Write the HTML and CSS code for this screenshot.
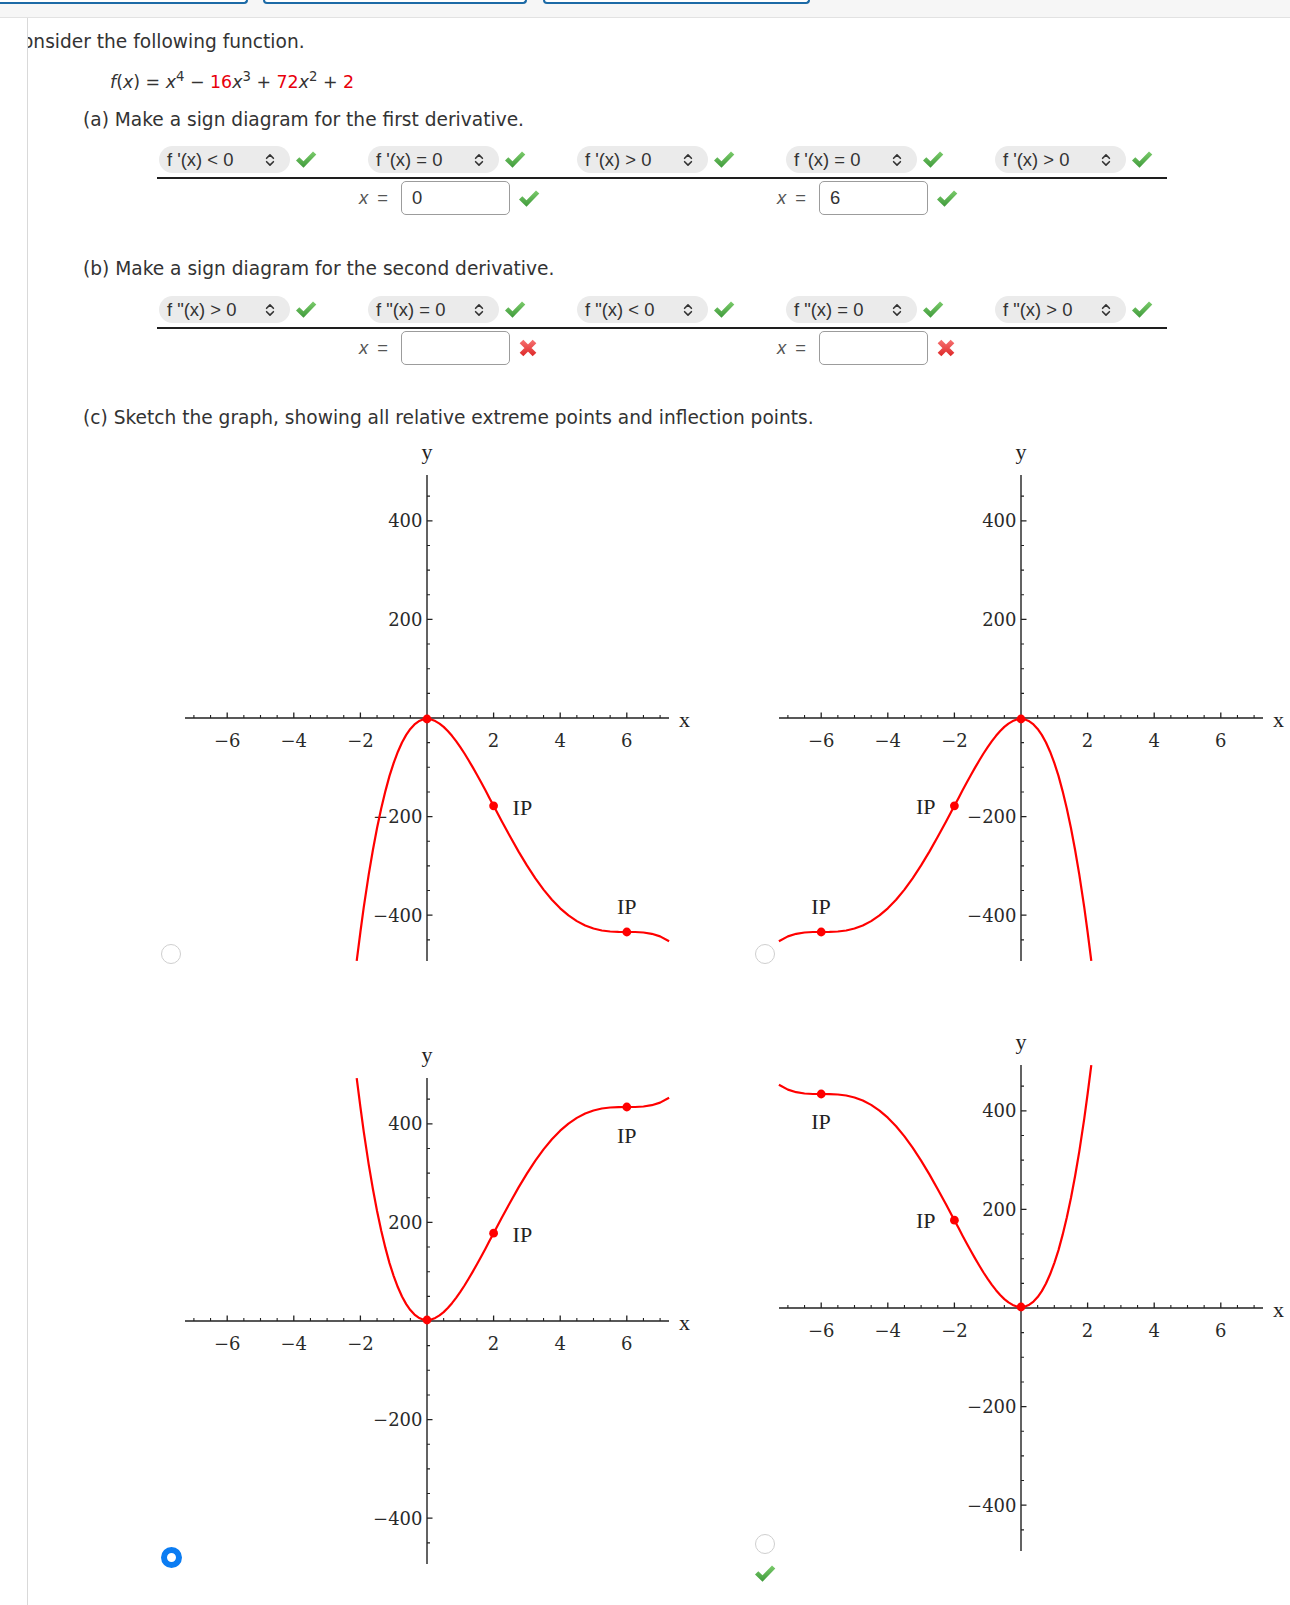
FILE: index.html
```html
<!DOCTYPE html>
<html lang="en">
<head>
<meta charset="utf-8">
<title>Sign diagrams</title>
<link rel="stylesheet" href="styles.css">
</head>
<body>
<svg class="defs" width="0" height="0" aria-hidden="true">
  <defs>
    <linearGradient id="gg" x1="0" y1="0" x2="0" y2="1">
      <stop offset="0" stop-color="#7ccc6c"/>
      <stop offset="1" stop-color="#3f9a3b"/>
    </linearGradient>
    <linearGradient id="rg" x1="0" y1="0" x2="0" y2="1">
      <stop offset="0" stop-color="#f46a6a"/>
      <stop offset="1" stop-color="#e02f2f"/>
    </linearGradient>
    <symbol id="chk" viewBox="0 0 22 19">
      <path d="M1 10.4 L4.3 7.3 L8.5 11.3 L18 1.4 L21.3 4.5 L8.5 17.7 Z" fill="url(#gg)"/>
    </symbol>
    <symbol id="crs" viewBox="0 0 20 20">
      <path d="M3.5 3.5 L16.5 16.5 M16.5 3.5 L3.5 16.5" stroke="url(#rg)" stroke-width="5.2" fill="none"/>
    </symbol>
    <symbol id="chev" viewBox="0 0 10 14">
      <path d="M1.6 5.3 L5 1.9 L8.4 5.3 M1.6 8.7 L5 12.1 L8.4 8.7" fill="none" stroke="#333" stroke-width="1.6" stroke-linecap="round" stroke-linejoin="round"/>
    </symbol>
    <g id="axes" fill="none" stroke="#222">
      <path d="M-242 0H242M0 -243V243" stroke-width="1.4"/>
      <path stroke-width="1.1" d="M16.65 0v-3M33.3 0v-3M49.95 0v-3M83.25 0v-3M99.9 0v-3M116.55 0v-3M149.85 0v-3M166.5 0v-3M183.15 0v-3M216.45 0v-3M233.1 0v-3M-16.65 0v-3M-33.3 0v-3M-49.95 0v-3M-83.25 0v-3M-99.9 0v-3M-116.55 0v-3M-149.85 0v-3M-166.5 0v-3M-183.15 0v-3M-216.45 0v-3M-233.1 0v-3M0 -24.65h3M0 -49.3h3M0 -73.95h3M0 -123.25h3M0 -147.9h3M0 -172.55h3M0 -221.85h3M0 24.65h3M0 49.3h3M0 73.95h3M0 123.25h3M0 147.9h3M0 172.55h3M0 221.85h3"/>
      <path stroke-width="1.3" d="M66.6 0v-5.5M133.2 0v-5.5M199.8 0v-5.5M-66.6 0v-5.5M-133.2 0v-5.5M-199.8 0v-5.5M0 -98.6h5.5M0 -197.2h5.5M0 98.6h5.5M0 197.2h5.5"/>
    </g>
    <g id="ticklabels" font-family="DejaVu Serif, serif" font-size="18" fill="#2a2a2a">
      <text x="-199.8" y="28.6" text-anchor="middle">−6</text>
      <text x="-133.2" y="28.6" text-anchor="middle">−4</text>
      <text x="-66.6" y="28.6" text-anchor="middle">−2</text>
      <text x="66.6" y="28.6" text-anchor="middle">2</text>
      <text x="133.2" y="28.6" text-anchor="middle">4</text>
      <text x="199.8" y="28.6" text-anchor="middle">6</text>
      <text x="-4.5" y="-190.6" text-anchor="end">400</text>
      <text x="-4.5" y="-92" text-anchor="end">200</text>
      <text x="-4.5" y="105.2" text-anchor="end">−200</text>
      <text x="-4.5" y="203.8" text-anchor="end">−400</text>
      <text x="0" y="-259.5" text-anchor="middle" font-family="Liberation Serif, Times New Roman, serif" font-size="22" fill="#222">y</text>
      <text x="252" y="8.7" font-family="Liberation Serif, Times New Roman, serif" font-size="22" fill="#222">x</text>
    </g>
    <path id="fcurve" fill="none" stroke="#ff0000" stroke-width="2.2" stroke-linejoin="round" d="M-70.3,-242.9 L-66.6,-214 L-63.3,-189.7 L-58.3,-156.6 L-54.1,-132 L-49.95,-110 L-45.8,-90.4 L-41.6,-73.1 L-37.5,-57.9 L-33.3,-44.9 L-29.1,-33.7 L-25,-24.5 L-20.8,-16.9 L-16.65,-10.9 L-12.5,-6.4 L-8.3,-3.3 L-4.2,-1.6 L0,-1 L4.2,-1.5 L8.3,-3.1 L12.5,-5.6 L16.65,-8.9 L20.8,-13 L25,-17.8 L29.1,-23.2 L33.3,-29.1 L37.5,-35.5 L41.6,-42.3 L45.8,-49.4 L49.95,-56.7 L54.1,-64.3 L58.3,-72 L62.4,-79.9 L66.6,-87.8 L74.9,-103.5 L83.25,-118.8 L91.6,-133.6 L99.9,-147.4 L108.2,-160.1 L116.55,-171.6 L124.9,-181.7 L133.2,-190.3 L141.5,-197.4 L149.85,-203.1 L158.2,-207.5 L166.5,-210.5 L174.8,-212.5 L183.15,-213.5 L191.5,-213.9 L199.8,-214 L208.1,-214 L216.45,-214.5 L224.8,-215.8 L233.1,-218.4 L242.1,-223.3"/>
    <g id="fdots" fill="#ff0000">
      <circle cx="0" cy="-1" r="4.4"/>
      <circle cx="66.6" cy="-87.8" r="4.4"/>
      <circle cx="199.8" cy="-214" r="4.4"/>
    </g>
  </defs>
</svg>

<div class="topbar">
  <div class="tab tab1"></div>
  <div class="tab tab2"></div>
  <div class="tab tab3"></div>
</div>

<div class="main">
  <p class="intro">Consider the following function.</p>
  <p class="formula"><i>f</i>(<i>x</i>) = <i>x</i><sup>4</sup> − <span class="red">16</span><i>x</i><sup>3</sup> + <span class="red">72</span><i>x</i><sup>2</sup> + <span class="red">2</span></p>

  <p class="part">(a) Make a sign diagram for the first derivative.</p>
  <div class="sign">
    <div class="sign-top">
      <div class="cell"><span class="sel"><span>f '(x) &lt; 0</span><svg class="chev"><use href="#chev"/></svg></span><svg class="ok"><use href="#chk"/></svg></div>
      <div class="cell"><span class="sel"><span>f '(x) = 0</span><svg class="chev"><use href="#chev"/></svg></span><svg class="ok"><use href="#chk"/></svg></div>
      <div class="cell"><span class="sel"><span>f '(x) &gt; 0</span><svg class="chev"><use href="#chev"/></svg></span><svg class="ok"><use href="#chk"/></svg></div>
      <div class="cell"><span class="sel"><span>f '(x) = 0</span><svg class="chev"><use href="#chev"/></svg></span><svg class="ok"><use href="#chk"/></svg></div>
      <div class="cell"><span class="sel"><span>f '(x) &gt; 0</span><svg class="chev"><use href="#chev"/></svg></span><svg class="ok"><use href="#chk"/></svg></div>
    </div>
    <div class="sign-bottom">
      <div></div>
      <div class="xg"><span class="xl"><i>x</i><span class="eq">=</span></span><span class="box">0</span><svg class="ok"><use href="#chk"/></svg></div>
      <div></div>
      <div class="xg"><span class="xl"><i>x</i><span class="eq">=</span></span><span class="box">6</span><svg class="ok"><use href="#chk"/></svg></div>
      <div></div>
    </div>
  </div>

  <p class="part part-b">(b) Make a sign diagram for the second derivative.</p>
  <div class="sign">
    <div class="sign-top">
      <div class="cell"><span class="sel"><span>f "(x) &gt; 0</span><svg class="chev"><use href="#chev"/></svg></span><svg class="ok"><use href="#chk"/></svg></div>
      <div class="cell"><span class="sel"><span>f "(x) = 0</span><svg class="chev"><use href="#chev"/></svg></span><svg class="ok"><use href="#chk"/></svg></div>
      <div class="cell"><span class="sel"><span>f "(x) &lt; 0</span><svg class="chev"><use href="#chev"/></svg></span><svg class="ok"><use href="#chk"/></svg></div>
      <div class="cell"><span class="sel"><span>f "(x) = 0</span><svg class="chev"><use href="#chev"/></svg></span><svg class="ok"><use href="#chk"/></svg></div>
      <div class="cell"><span class="sel"><span>f "(x) &gt; 0</span><svg class="chev"><use href="#chev"/></svg></span><svg class="ok"><use href="#chk"/></svg></div>
    </div>
    <div class="sign-bottom">
      <div></div>
      <div class="xg"><span class="xl"><i>x</i><span class="eq">=</span></span><span class="box"></span><svg class="bad"><use href="#crs"/></svg></div>
      <div></div>
      <div class="xg"><span class="xl"><i>x</i><span class="eq">=</span></span><span class="box"></span><svg class="bad"><use href="#crs"/></svg></div>
      <div></div>
    </div>
  </div>

  <p class="part part-c">(c) Sketch the graph, showing all relative extreme points and inflection points.</p>

  <div class="graphs">
    <div class="opt">
      <div class="rcol"><span class="radio"></span></div>
      <svg class="plot" width="515" height="540" viewBox="0 0 515 540">
        <g transform="translate(246 290)">
          <use href="#axes"/>
          <use href="#ticklabels"/>
          <g transform="scale(1 -1)"><use href="#fcurve"/><use href="#fdots"/></g>
          <text class="ip" x="85.6" y="97.3">IP</text>
          <text class="ip" x="199.8" y="196" text-anchor="middle">IP</text>
        </g>
      </svg>
    </div>
    <div class="opt">
      <div class="rcol"><span class="radio"></span></div>
      <svg class="plot" width="515" height="540" viewBox="0 0 515 540">
        <g transform="translate(246 290)">
          <use href="#axes"/>
          <use href="#ticklabels"/>
          <g transform="scale(-1 -1)"><use href="#fcurve"/><use href="#fdots"/></g>
          <text class="ip" x="-85.5" y="96" text-anchor="end">IP</text>
          <text class="ip" x="-200" y="196" text-anchor="middle">IP</text>
        </g>
      </svg>
    </div>
    <div class="opt opt3">
      <div class="rcol"><span class="radio on"></span></div>
      <svg class="plot" width="515" height="540" viewBox="0 0 515 540">
        <g transform="translate(246 290)">
          <use href="#axes"/>
          <use href="#ticklabels"/>
          <g><use href="#fcurve"/><use href="#fdots"/></g>
          <text class="ip" x="85.6" y="-79.4">IP</text>
          <text class="ip" x="199.8" y="-178.4" text-anchor="middle">IP</text>
        </g>
      </svg>
    </div>
    <div class="opt">
      <div class="rcol"><span class="radio"></span><svg class="ok okr"><use href="#chk"/></svg></div>
      <svg class="plot" width="515" height="540" viewBox="0 0 515 540">
        <g transform="translate(246 290)">
          <use href="#axes"/>
          <use href="#ticklabels"/>
          <g transform="scale(-1 1)"><use href="#fcurve"/><use href="#fdots"/></g>
          <text class="ip" x="-85.5" y="-80" text-anchor="end">IP</text>
          <text class="ip" x="-200" y="-179" text-anchor="middle">IP</text>
        </g>
      </svg>
    </div>
  </div>
</div>
</body>
</html>
```

FILE: styles.css
```css
* { box-sizing: border-box; }

html, body {
  margin: 0;
  padding: 0;
  background: #ffffff;
}

body {
  width: 1290px;
  font-family: "DejaVu Sans", Verdana, sans-serif;
  font-size: 18.6px;
  color: #333333;
  overflow: hidden;
}

.defs {
  display: block;
  width: 0;
  height: 0;
  overflow: hidden;
}

/* top strip with the bottoms of three tab buttons */
.topbar {
  height: 18px;
  background: #f6f6f6;
  border-bottom: 1px solid #e2e2e2;
  display: flex;
  align-items: flex-start;
  overflow: hidden;
}

.tab {
  height: 4px;
  background: #ffffff;
  border: 2px solid #1c6aa6;
  border-top: 0;
  border-radius: 0 0 5px 5px;
}

.tab1 { width: 258px; margin-left: -10px; }
.tab2 { width: 264px; margin-left: 15px; }
.tab3 { width: 267px; margin-left: 16px; }

.main {
  margin-left: 27px;
  border-left: 1px solid #d9d9d9;
  min-height: 1587px;
  overflow: hidden;
}

.intro {
  margin: 13px 0 0;
  line-height: 22px;
  text-indent: -19px;
  white-space: nowrap;
}

.formula {
  margin: 18px 0 0 82px;
  line-height: 22px;
  font-size: 17.4px;
  white-space: nowrap;
}

.formula sup {
  font-size: 0.76em;
  line-height: 0;
  vertical-align: 0.55em;
}

.red { color: #e8000b; }

.part {
  margin: 16px 0 0 55px;
  line-height: 22px;
  white-space: nowrap;
}

.part-b { margin-top: 43px; }
.part-c { margin-top: 42px; }

/* sign diagrams */
.sign {
  margin: 15px 0 0 129px;
  width: 1010px;
}

.part-b + .sign { margin-top: 16px; }

.sign-top {
  display: grid;
  grid-template-columns: repeat(5, 209px);
  height: 33px;
  border-bottom: 2px solid #1e1e1e;
}

.cell {
  display: flex;
  align-items: center;
  align-self: start;
  gap: 5px;
  height: 27px;
}

.sel {
  display: flex;
  align-items: center;
  justify-content: space-between;
  width: 131px;
  height: 27px;
  margin-left: 2px;
  padding: 0 15px 0 8px;
  border-radius: 14px;
  background: #ebebeb;
  font-family: "Liberation Sans", Arial, sans-serif;
  font-size: 18.4px;
  color: #333333;
  white-space: pre;
}

.chev {
  width: 10px;
  height: 14px;
  flex: none;
}

.ok {
  width: 22px;
  height: 19px;
  flex: none;
}

.bad {
  width: 20px;
  height: 20px;
  flex: none;
}

.sign-bottom {
  display: grid;
  grid-template-columns: repeat(5, 209px);
  padding-top: 2px;
}

.xg {
  display: flex;
  align-items: center;
  height: 34px;
  margin-left: -7px;
  white-space: nowrap;
}

.xl {
  display: flex;
  align-items: center;
  font-family: "Liberation Sans", Arial, sans-serif;
  font-size: 18.4px;
  color: #555555;
  width: 42px;
}

.xl .eq { margin-left: 9px; }

.box {
  display: flex;
  align-items: center;
  width: 109px;
  height: 34px;
  padding-left: 10px;
  border: 1px solid #9c9c9c;
  border-radius: 5px;
  background: #ffffff;
  font-family: "Liberation Sans", Arial, sans-serif;
  font-size: 18.4px;
  color: #333333;
  margin-right: 8px;
}

/* graph choices */
.graphs {
  display: grid;
  grid-template-columns: 594px 594px;
  row-gap: 50px;
  margin: -1px 0 0 133px;
  width: 1188px;
}

.opt {
  display: flex;
  align-items: flex-start;
}

.opt3 { padding-top: 13px; }

.rcol {
  width: 20px;
  flex: none;
  display: flex;
  flex-direction: column;
  align-items: center;
  padding-top: 516px;
}

.radio {
  display: block;
  width: 20px;
  height: 20px;
  border: 1.5px solid #cfcfcf;
  border-radius: 50%;
  background: #ffffff;
}

.radio.on {
  width: 21px;
  height: 21px;
  border: 6px solid #0b7cf2;
}

.okr { margin-top: 10px; }

.plot {
  display: block;
  flex: none;
}

.ip {
  font-family: "Liberation Serif", "Times New Roman", serif;
  font-size: 22px;
  fill: #222222;
}
```
